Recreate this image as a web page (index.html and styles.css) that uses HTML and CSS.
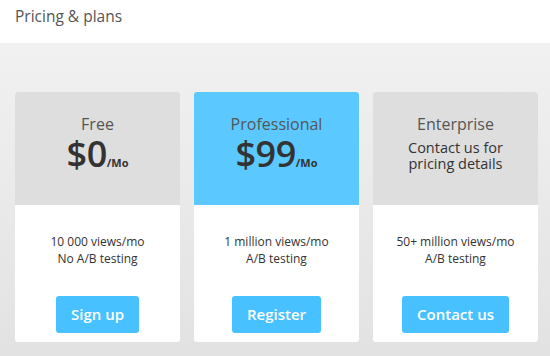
FILE: index.html
```html
<!DOCTYPE html>
<html>
<head>
<meta charset="utf-8">
<link rel="stylesheet" href="styles.css">
</head>
<body>
<header class="topbar">Pricing &amp; plans</header>
<main class="stage">
  <section class="plans">
    <div class="plan">
      <div class="plan-head">
        <div class="plan-name">Free</div>
        <div class="plan-price">$0<span class="per">/Mo</span></div>
      </div>
      <div class="plan-body">
        <p class="features">10 000 views/mo<br>No A/B testing</p>
        <a class="btn">Sign up</a>
      </div>
    </div>
    <div class="plan featured">
      <div class="plan-head">
        <div class="plan-name">Professional</div>
        <div class="plan-price">$99<span class="per">/Mo</span></div>
      </div>
      <div class="plan-body">
        <p class="features">1 million views/mo<br>A/B testing</p>
        <a class="btn">Register</a>
      </div>
    </div>
    <div class="plan">
      <div class="plan-head">
        <div class="plan-name">Enterprise</div>
        <div class="plan-contact">Contact us for<br>pricing details</div>
      </div>
      <div class="plan-body">
        <p class="features">50+ million views/mo<br>A/B testing</p>
        <a class="btn">Contact us</a>
      </div>
    </div>
  </section>
</main>
</body>
</html>
```

FILE: styles.css
```css
* { box-sizing: border-box; }
html, body { margin: 0; padding: 0; }
body {
  width: 550px;
  height: 356px;
  overflow: hidden;
  font-family: "Open Sans", "Liberation Sans", sans-serif;
  color: #333;
  background: #fff;
}
.topbar {
  height: 43px;
  padding: 5px 15px 0;
  font-size: 15.5px;
  line-height: 22px;
  color: #555;
  background: #fff;
}
.stage {
  height: 313px;
  padding: 49px 12px 0 15px;
  background: linear-gradient(#f1f1f1, #e2e2e2);
}
.plans {
  display: flex;
  gap: 14px;
}
.plan {
  width: 165px;
  height: 250px;
  border-radius: 3px;
  overflow: hidden;
  background: #fff;
  display: flex;
  flex-direction: column;
}
.plan-head {
  height: 113px;
  background: #dedede;
  text-align: center;
  padding-top: 22px;
}
.featured .plan-head { background: #5bc9ff; }
.plan-name {
  font-size: 16px;
  line-height: 20px;
  color: #555;
}
.plan-price {
  font-size: 36px;
  font-weight: 600;
  line-height: 40px;
  color: #333;
  letter-spacing: -0.5px;
}
.per {
  font-size: 11px;
  font-weight: 700;
  letter-spacing: 0;
}
.plan-contact {
  margin-top: 6px;
  font-size: 14.5px;
  line-height: 16px;
  color: #333;
}
.plan-body {
  flex: 1;
  display: flex;
  flex-direction: column;
  align-items: center;
  padding-top: 28px;
}
.features {
  margin: 0;
  font-size: 12px;
  line-height: 17px;
  text-align: center;
  color: #333;
}
.btn {
  margin-top: 29px;
  height: 37px;
  padding: 0 15px;
  border-radius: 3px;
  background: #47c1ff;
  color: #fff;
  font-size: 15px;
  font-weight: 600;
  line-height: 37px;
}
```
